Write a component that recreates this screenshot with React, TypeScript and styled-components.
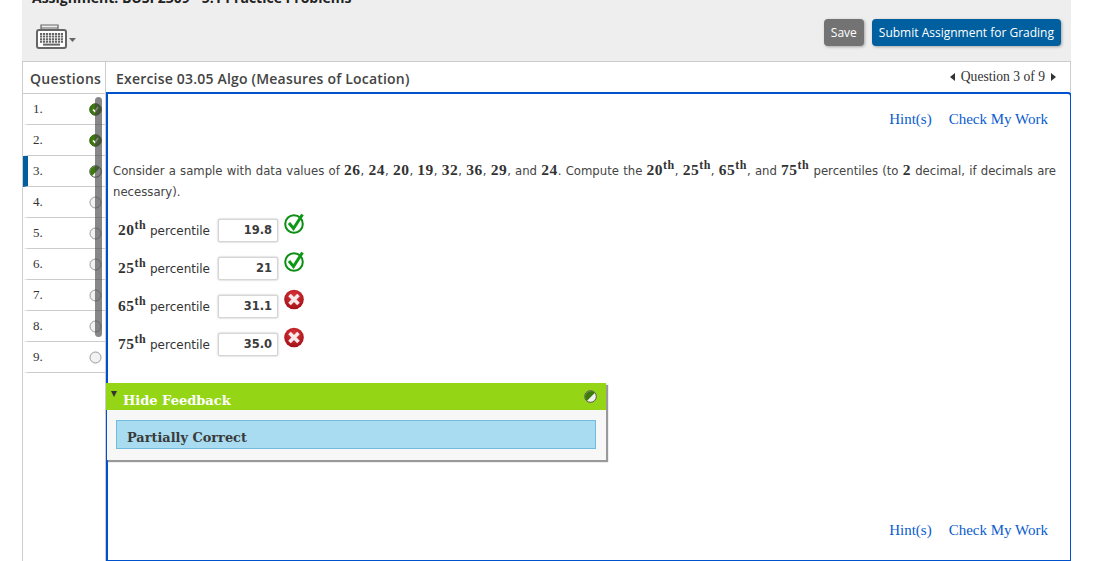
import React from 'react';
import styled, { createGlobalStyle } from 'styled-components';

const SERIF = '"Liberation Serif", serif';
const HEAVY_SERIF = '"DejaVu Serif", serif';
const UI = '"Open Sans", sans-serif';
const BODY = '"DejaVu Sans", sans-serif';

type Status = 'done' | 'partial' | 'empty';

const questions: Status[] = ['done', 'done', 'partial', 'empty', 'empty', 'empty', 'empty', 'empty', 'empty'];

const answers = [
    { pct: '20', value: '19.8', ok: true },
    { pct: '25', value: '21', ok: true },
    { pct: '65', value: '31.1', ok: false },
    { pct: '75', value: '35.0', ok: false },
];

const KeyboardIcon = () => (
    <svg width="44" height="27" viewBox="0 0 44 27">
        <path d="M5 2h17M5 1.5v5M22 1.5v5M5 5h17" stroke="#666" strokeWidth="1.2" fill="none" />
        <rect x="1" y="7" width="29" height="18" rx="2" fill="#fff" stroke="#666" strokeWidth="2" />
        <path d="M4 11h23M4 13.6h23M4 16.2h23M4 18.8h23" stroke="#666" strokeWidth="2" strokeDasharray="2.2 .8" fill="none" />
        <path d="M7 21.6h17" stroke="#666" strokeWidth="2" fill="none" />
        <path d="M33 15h7l-3.5 4z" fill="#666" />
    </svg>
);

const CheckIcon = () => (
    <svg width="21" height="21" viewBox="0 0 21 21">
        <circle cx="10" cy="11" r="8.8" fill="#fff" stroke="#0c8f12" strokeWidth="2" />
        <path d="M5 10l4.5 5.5 9-14" fill="none" stroke="#0c9a14" strokeWidth="3" />
    </svg>
);

const CrossIcon = () => (
    <svg width="21" height="21" viewBox="0 0 21 21">
        <defs>
            <radialGradient id="crossBall" cx="50%" cy="35%" r="70%">
                <stop offset="0%" stopColor="#e0393f" />
                <stop offset="100%" stopColor="#9c0d14" />
            </radialGradient>
        </defs>
        <circle cx="10" cy="10.5" r="9.8" fill="url(#crossBall)" />
        <path d="M5.5 6l9 9M14.5 6l-9 9" stroke="#f6eaea" strokeWidth="3.6" fill="none" />
    </svg>
);

const StatusIcon = ({ status }: { status: Status }) => {
    if (status === 'empty') {
        return (
            <svg width="13" height="13" viewBox="0 0 13 13">
                <circle cx="6.5" cy="6.5" r="5.5" fill="#f2f2f2" stroke="#999" strokeWidth="1" />
            </svg>
        );
    }
    if (status === 'done') {
        return (
            <svg width="13" height="13" viewBox="0 0 13 13">
                <circle cx="6.5" cy="6.5" r="5.8" fill="#3d7a0c" stroke="#2f5f0a" strokeWidth="1" />
                <path d="M4 6.5l2 2 3-4.5" fill="none" stroke="#fff" strokeWidth="1.5" />
            </svg>
        );
    }
    return (
        <svg width="13" height="13" viewBox="0 0 13 13">
            <circle cx="6.5" cy="6.5" r="5.8" fill="#f2f2f2" stroke="#555" strokeWidth="1" />
            <path d="M11 2.8A5.8 5.8 0 1 0 2.8 11z" fill="#3d7a0c" />
        </svg>
    );
};

const Links = () => (
    <LinkRow>
        <HintLink>Hint(s)</HintLink>
        <HintLink>Check My Work</HintLink>
    </LinkRow>
);

const App = () => {
    return (
        <Page>
            <GlobalStyle />
            <Header>
                <AssignmentTitle>Assignment: BUSI 2309 - 5.1 Practice Problems</AssignmentTitle>
                <Toolbar>
                    <KeyboardSlot>
                        <KeyboardIcon />
                    </KeyboardSlot>
                    <Actions>
                        <ActionButton $grey>Save</ActionButton>
                        <ActionButton>Submit Assignment for Grading</ActionButton>
                    </Actions>
                </Toolbar>
            </Header>
            <Main>
                <Sidebar>
                    <SidebarTitle>Questions</SidebarTitle>
                    <QuestionList>
                        {questions.map((status, i) => (
                            <QuestionRow key={i} $active={i === 2}>
                                <span>{i + 1}.</span>
                                <StatusIcon status={status} />
                            </QuestionRow>
                        ))}
                        <ScrollThumb />
                    </QuestionList>
                </Sidebar>
                <Exercise>
                    <ExerciseHead>
                        <ExerciseTitle>Exercise 03.05 Algo (Measures of Location)</ExerciseTitle>
                        <Pager>
                            <Arrow $left />
                            Question 3 of 9
                            <Arrow />
                        </Pager>
                    </ExerciseHead>
                    <Panel>
                        <Links />
                        <Prompt>
                            Consider a sample with data values of <M>26</M>, <M>24</M>, <M>20</M>, <M>19</M>,{' '}
                            <M>32</M>, <M>36</M>, <M>29</M>, and <M>24</M>. Compute the <M>20<sup>th</sup></M>,{' '}
                            <M>25<sup>th</sup></M>, <M>65<sup>th</sup></M>, and <M>75<sup>th</sup></M> percentiles
                            (to <M>2</M> decimal, if decimals are necessary).
                        </Prompt>
                        <AnswerList>
                            {answers.map((a) => (
                                <AnswerRow key={a.pct}>
                                    <AnswerLabel>
                                        <M>{a.pct}<sup>th</sup></M> percentile
                                    </AnswerLabel>
                                    <AnswerBox>{a.value}</AnswerBox>
                                    <AnswerMark>{a.ok ? <CheckIcon /> : <CrossIcon />}</AnswerMark>
                                </AnswerRow>
                            ))}
                        </AnswerList>
                        <Feedback>
                            <FeedbackHead>
                                <FeedbackToggle>
                                    <Caret />
                                    Hide Feedback
                                </FeedbackToggle>
                                <StatusIcon status="partial" />
                            </FeedbackHead>
                            <FeedbackBody>
                                <FeedbackMessage>Partially Correct</FeedbackMessage>
                            </FeedbackBody>
                        </Feedback>
                        <BottomLinks>
                            <Links />
                        </BottomLinks>
                    </Panel>
                </Exercise>
            </Main>
        </Page>
    );
};

const GlobalStyle = createGlobalStyle`
    html, body {
        margin: 0;
        height: 561px;
        overflow: hidden;
        background: #fff;
    }
`;

const Page = styled.div`
    width: 1049px;
    margin-left: 22px;
    height: 561px;
    overflow: hidden;
`;

const Header = styled.div`
    height: 61px;
    background-color: #eeeeee;
    overflow: hidden;
`;

const AssignmentTitle = styled.div`
    margin: -11px 0 0 10px;
    height: 18px;
    font: bold 14px/18px ${UI};
    color: #222;
`;

const Toolbar = styled.div`
    display: flex;
    justify-content: space-between;
    align-items: flex-start;
    padding: 12px 10px 0 14px;
`;

const KeyboardSlot = styled.div`
    margin-top: 4px;
`;

const Actions = styled.div`
    display: flex;
    gap: 8px;
`;

const ActionButton = styled.button<{ $grey?: boolean }>`
    height: 27px;
    padding: 0 7px;
    border: 0;
    border-radius: 4px;
    background-color: ${(p) => (p.$grey ? '#737373' : '#005f9e')};
    color: #fff;
    font: 400 12px/27px ${UI};
    box-shadow: 1px 1px 3px rgba(0, 0, 0, 0.3);
`;

const Main = styled.div`
    display: flex;
    height: 500px;
    border-top: 1px solid #cccccc;
    border-left: 1px solid #cccccc;
`;

const Sidebar = styled.div`
    width: 82px;
    flex-shrink: 0;
`;

const SidebarTitle = styled.div`
    height: 31px;
    padding-left: 7px;
    font: 600 14px/34px ${UI};
    color: #444;
    letter-spacing: 0.3px;
    border-bottom: 1px solid #cccccc;
    box-sizing: content-box;
`;

const QuestionList = styled.div`
    position: relative;
`;

const QuestionRow = styled.div<{ $active?: boolean }>`
    display: flex;
    justify-content: space-between;
    align-items: center;
    height: 30px;
    padding: 0 4px 0 10px;
    border-bottom: 1px solid #cccccc;
    border-left: 5px solid ${(p) => (p.$active ? '#005f9e' : 'transparent')};
    margin-right: -1px;
    font: 13px/30px ${SERIF};
    color: #333;
    box-sizing: content-box;
    span {
        margin-left: -5px;
    }
`;

const ScrollThumb = styled.div`
    position: absolute;
    top: 3px;
    left: 72px;
    width: 7px;
    height: 240px;
    border-radius: 4px;
    background-color: rgba(70, 70, 70, 0.65);
`;

const Exercise = styled.div`
    flex: 1;
    min-width: 0;
    border-left: 1px solid #cccccc;
    display: flex;
    flex-direction: column;
`;

const ExerciseHead = styled.div`
    display: flex;
    justify-content: space-between;
    height: 30px;
    padding: 0 14px 0 10px;
    border-right: 1px solid #cccccc;
`;

const ExerciseTitle = styled.div`
    font: 600 14px/34px ${UI};
    letter-spacing: 0.2px;
    color: #444;
`;

const Pager = styled.div`
    display: flex;
    align-items: center;
    gap: 6px;
    font: 13.6px/30px ${SERIF};
    color: #333;
`;

const Arrow = styled.span<{ $left?: boolean }>`
    width: 0;
    height: 0;
    border-top: 4px solid transparent;
    border-bottom: 4px solid transparent;
    ${(p) => (p.$left ? 'border-right: 5px solid #333;' : 'border-left: 5px solid #333;')}
`;

const Panel = styled.div`
    flex: 1;
    margin-right: -1px;
    padding-top: 15px;
    border: 2px solid #0052cc;
    border-radius: 0 4px 0 0;
`;

const LinkRow = styled.div`
    display: flex;
    justify-content: flex-end;
    gap: 17px;
    padding-right: 22px;
`;

const HintLink = styled.a`
    font: 15px/20px ${SERIF};
    color: #0a5ccf;
    cursor: pointer;
`;

const Prompt = styled.p`
    margin: 0;
    padding: 32px 14px 0 5px;
    font: 11.7px/21px ${BODY};
    color: #444;
    text-align: justify;
    sup {
        font-size: 12px;
        line-height: 0;
    }
`;

const M = styled.span`
    font: bold 15.5px/1 ${SERIF};
    letter-spacing: 0.5px;
    color: #333;
`;

const AnswerList = styled.div`
    display: flex;
    flex-direction: column;
    gap: 15px;
    padding: 17px 0 0 10px;
`;

const AnswerRow = styled.div`
    display: flex;
    align-items: center;
    height: 23px;
`;

const AnswerLabel = styled.div`
    width: 100px;
    font: 12px/23px ${BODY};
    color: #333;
    sup {
        font-size: 12px;
        line-height: 0;
    }
`;

const AnswerBox = styled.div`
    width: 60px;
    height: 23px;
    margin-top: -2px;
    padding-right: 5px;
    box-sizing: border-box;
    border-radius: 2px;
    background: #fff;
    border: 1px solid #d6d6d6;
    box-shadow: 0 0 2px rgba(0, 0, 0, 0.35);
    text-align: right;
    font: bold 11.5px/20px ${BODY};
    color: #3c3c3c;
`;

const AnswerMark = styled.div`
    margin: -16px 0 0 6px;
    height: 21px;
`;

const Feedback = styled.div`
    width: 500px;
    margin-top: 26px;
    margin-left: -2px;
    box-shadow: 2px 2px 1px #999;
`;

const FeedbackHead = styled.div`
    display: flex;
    justify-content: space-between;
    align-items: center;
    height: 27px;
    padding: 0 9px 0 5px;
    background-color: #94d615;
`;

const FeedbackToggle = styled.div`
    position: relative;
    margin-top: 8px;
    padding-left: 12px;
    font: bold 13px/33px ${HEAVY_SERIF};
    color: #fff;
`;

const Caret = styled.span`
    position: absolute;
    left: 0;
    top: 7px;
    width: 0;
    height: 0;
    border-left: 3.5px solid transparent;
    border-right: 3.5px solid transparent;
    border-top: 6px solid #333;
`;

const FeedbackBody = styled.div`
    padding: 10px 10px 11px 9px;
    margin-left: 1px;
    background-color: #f7f7f7;
`;

const FeedbackMessage = styled.div`
    height: 29px;
    padding-left: 10px;
    box-sizing: border-box;
    background-color: #a9dcf0;
    border: 1px solid #6fbcdc;
    font: bold 12.9px/34px ${HEAVY_SERIF};
    color: #3a3a3a;
`;

const BottomLinks = styled.div`
    margin-top: 60px;
`;

export default App;
